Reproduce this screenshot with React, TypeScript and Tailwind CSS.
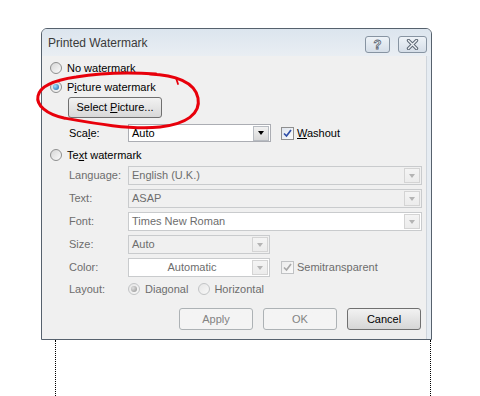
import React from 'react';

const FONT = "font-['Liberation_Sans',Arial,sans-serif]";

function Radio({ checked = false, disabled = false }: { checked?: boolean; disabled?: boolean }) {
  return (
    <span
      className={`flex h-[12px] w-[12px] shrink-0 items-center justify-center rounded-full border bg-linear-to-br ${
        disabled ? 'border-[#c2c4c6] from-[#e6e6e6] to-[#f8f8f8]' : 'border-[#8e8f8f] from-[#d6d6d6] to-[#fbfbfb]'
      }`}
    >
      {checked && (
        <span
          className={`h-[6px] w-[6px] rounded-full ${
            disabled
              ? 'bg-[radial-gradient(circle_at_35%_35%,#e0e0e0,#8f8f8f)]'
              : 'bg-[radial-gradient(circle_at_35%_35%,#9fe0ff,#1760a8)]'
          }`}
        />
      )}
    </span>
  );
}

function Check({ disabled = false }: { disabled?: boolean }) {
  return (
    <span
      className={`flex h-[13px] w-[13px] shrink-0 items-center justify-center border bg-linear-to-br ${
        disabled ? 'border-[#c0c2c4] from-[#ececec] to-[#fafafa]' : 'border-[#8f8f8f] from-[#dfe5ee] to-[#fbfcfd]'
      }`}
    >
      <svg width="11" height="11" viewBox="0 0 11 11">
        <path d="M2 5.5 L4.5 8 L9 2" fill="none" stroke={disabled ? '#a8a8a8' : '#2f4fa8'} strokeWidth="1.7" />
      </svg>
    </span>
  );
}

function Arrow({ disabled = false }: { disabled?: boolean }) {
  return (
    <span
      className={`flex h-[15px] w-[16px] items-center justify-center border bg-linear-to-b ${
        disabled ? 'border-[#d4d4d4] from-[#f4f4f4] to-[#ececec]' : 'border-[#b8bcc2] from-[#f2f2f2] to-[#d8d8d8]'
      }`}
    >
      <span
        className={`h-0 w-0 border-x-[3.5px] border-t-[4px] border-x-transparent ${
          disabled ? 'border-t-[#b4b4b4]' : 'border-t-black'
        }`}
      />
    </span>
  );
}

function Combo({
  value,
  width,
  disabled = false,
  white = false,
  center = false,
}: {
  value: string;
  width: string;
  disabled?: boolean;
  white?: boolean;
  center?: boolean;
}) {
  return (
    <div
      className={`flex h-full items-center border pl-[3px] pr-[1px] ${width} ${
        disabled ? 'border-[#c9cbcd] text-[#6d6d6d]' : 'border-[#abadb3] text-black'
      } ${white ? 'bg-white' : 'bg-[#f0f0f0]'}`}
    >
      <span className={`flex-1 ${center ? 'text-center' : ''}`}>{value}</span>
      <Arrow disabled={disabled} />
    </div>
  );
}

function Field({ label, children }: { label: string; children: React.ReactNode }) {
  return (
    <div className="flex h-[19px] items-center">
      <span className="ml-[27px] w-[59px] text-[#6d6d6d]">{label}</span>
      {children}
    </div>
  );
}

function Btn({ children, disabled = false }: { children: React.ReactNode; disabled?: boolean }) {
  return (
    <div
      className={`flex h-[22px] w-[74px] items-center justify-center rounded-[3px] border bg-linear-to-b ${
        disabled
          ? 'border-[#adb2b5] from-[#f4f4f4] to-[#f4f4f4] text-[#838383]'
          : 'border-[#707070] from-[#f2f2f2] to-[#d6d6d6] text-black'
      }`}
    >
      {children}
    </div>
  );
}

export default function App() {
  return (
    <div className={`relative h-[396px] w-[480px] overflow-hidden bg-white pl-[41px] pt-[28px] text-[11px] ${FONT}`}>
      <div className="w-[391px] rounded-t-[6px] border border-[#56616d] bg-[#e6ecf2]">
        <div className="flex h-[27px] items-center justify-between rounded-t-[5px] bg-linear-to-b from-[#dce5ee] to-[#e9eef3] pl-[6px] pr-[4px]">
          <span className="text-[12px] text-[#3a3a3a]">Printed Watermark</span>
          <div className="flex gap-[8px] pt-[4px]">
            <div className="flex h-[17px] w-[25px] items-center justify-center rounded-[3px] border border-[#8794a2] bg-linear-to-b from-[#eef3f8] to-[#d5dee8]">
              <span className="text-[13px] font-bold text-[#eef2f6] [-webkit-text-stroke:0.8px_#5d6875]">?</span>
            </div>
            <div className="flex h-[17px] w-[29px] items-center justify-center rounded-[3px] border border-[#8794a2] bg-linear-to-b from-[#eef3f8] to-[#d5dee8]">
              <svg width="13" height="11" viewBox="0 0 13 11">
                <path d="M2.5 1.5 L10.5 9.5 M10.5 1.5 L2.5 9.5" stroke="#5d6875" strokeWidth="3.4" strokeLinecap="round" />
                <path d="M2.5 1.5 L10.5 9.5 M10.5 1.5 L2.5 9.5" stroke="#eef2f6" strokeWidth="1.4" strokeLinecap="round" />
              </svg>
            </div>
          </div>
        </div>

        <div className="mr-[4px] flex flex-col border-r border-[#cfd5dc] bg-[#f0f0f0] pb-[9px] pt-[3px] text-black">
          <div className="flex h-[18px] items-center gap-[5px] pl-[8px]">
            <Radio />
            <span>No watermark</span>
          </div>
          <div className="mt-[1px] flex h-[18px] items-center gap-[5px] pl-[8px]">
            <Radio checked />
            <span>
              P<span className="underline">i</span>cture watermark
            </span>
          </div>
          <div className="ml-[26px] mt-[1px] flex h-[21px] w-[94px] items-center justify-center rounded-[3px] border border-[#707070] bg-linear-to-b from-[#f2f2f2] to-[#d8d8d8]">
            Select <span className="ml-[3px] underline">P</span>icture...
          </div>
          <div className="mt-[6px] flex h-[18px] items-center">
            <span className="ml-[27px] w-[59px]">
              Sca<span className="underline">l</span>e:
            </span>
            <Combo value="Auto" width="w-[143px]" white />
            <span className="ml-[10px] flex items-center gap-[3px]">
              <Check />
              <span>
                <span className="underline">W</span>ashout
              </span>
            </span>
          </div>
          <div className="mt-[4px] flex h-[18px] items-center gap-[5px] pl-[8px]">
            <Radio />
            <span>
              Te<span className="underline">x</span>t watermark
            </span>
          </div>
          <div className="mt-[2px]">
            <Field label="Language:">
              <Combo value="English (U.K.)" width="w-[294px]" disabled />
            </Field>
          </div>
          <div className="mt-[4px]">
            <Field label="Text:">
              <Combo value="ASAP" width="w-[294px]" disabled />
            </Field>
          </div>
          <div className="mt-[4px]">
            <Field label="Font:">
              <Combo value="Times New Roman" width="w-[294px]" disabled white />
            </Field>
          </div>
          <div className="mt-[4px]">
            <Field label="Size:">
              <Combo value="Auto" width="w-[142px]" disabled />
            </Field>
          </div>
          <div className="mt-[4px]">
            <Field label="Color:">
              <Combo value="Automatic" width="w-[142px]" disabled white center />
              <span className="ml-[11px] flex items-center gap-[3px]">
                <Check disabled />
                <span className="text-[#6d6d6d]">Semitransparent</span>
              </span>
            </Field>
          </div>
          <div className="mt-[3px] flex h-[18px] items-center text-[#6d6d6d]">
            <span className="ml-[27px] w-[59px]">Layout:</span>
            <span className="flex items-center gap-[5px]">
              <Radio checked disabled />
              <span>Diagonal</span>
            </span>
            <span className="ml-[10px] flex items-center gap-[4px]">
              <Radio disabled />
              <span>Horizontal</span>
            </span>
          </div>
          <div className="mt-[10px] flex justify-end gap-[10px] pr-[5px]">
            <Btn disabled>Apply</Btn>
            <Btn disabled>OK</Btn>
            <Btn>Cancel</Btn>
          </div>
        </div>
      </div>

      <div className="ml-[14px] h-[56px] w-[376px] border-x border-dotted border-black" />

      <svg className="pointer-events-none absolute left-0 top-0" width="480" height="396" viewBox="0 0 480 396">
        <path
          d="M150 74 C175 75 195 82 198 98 C201 114 186 124 160 127 C130 130 92 123 64 118 C46 114 36 105 38 96 C40 86 55 80 76 77 C100 73 128 72 156 74"
          fill="none"
          stroke="#e8000b"
          strokeWidth="3"
          strokeLinecap="round"
        />
        <path d="M176 78 L178 84" stroke="#e8000b" strokeWidth="1.8" strokeLinecap="round" />
      </svg>
    </div>
  );
}
